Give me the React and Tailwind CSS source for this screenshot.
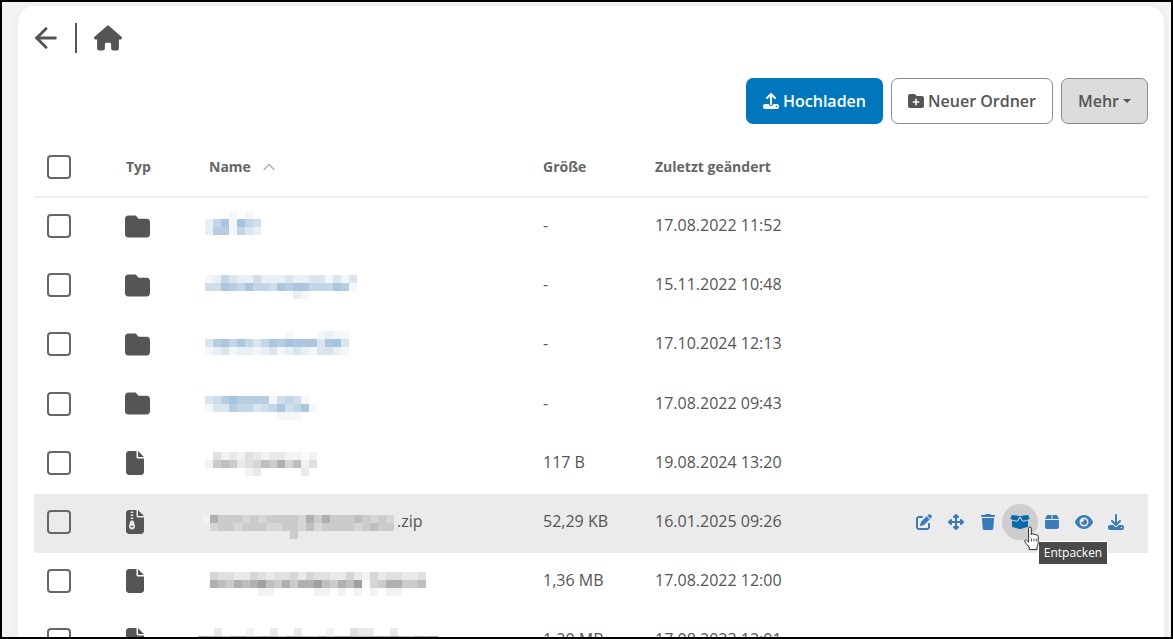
import { ArrowLeft, ChevronUp } from 'lucide-react';
import {
  FaHouse,
  FaFolder,
  FaFile,
  FaFileZipper,
  FaUpload,
  FaFolderPlus,
  FaPenToSquare,
  FaUpDownLeftRight,
  FaTrash,
  FaBoxOpen,
  FaBox,
  FaEye,
  FaDownload
} from 'react-icons/fa6';

// Farbstufen für die verpixelten Dateinamen ('.' = keine Zelle)
const BLUE = ['#ffffff', '#f3f7fa', '#e8eff5', '#dae5ef', '#cfdeea', '#c3d6e7', '#b8cde2', '#adc6df', '#a3c3df', '#98bcdc'];
const GRAY = ['#fbfbfb', '#f2f2f2', '#e9e9e9', '#e0e0e0', '#d6d6d6', '#cbcbcb', '#bebebe', '#b0b0b0', '#a0a0a0', '#8c8c8c'];

const ROWS = [
  {
    kind: 'folder', size: '-', date: '17.08.2022 11:52', palette: BLUE, x: 0, dy: 1,
    mosaic: ['...1.1.', '2571854', '2661532', '']
  },
  {
    kind: 'folder', size: '-', date: '15.11.2022 10:48', palette: BLUE, x: 0, dy: -2,
    mosaic: ['', '1253224222322331313', '4476575547677555761', '...........21']
  },
  {
    kind: 'folder', size: '-', date: '17.10.2024 12:13', palette: BLUE, x: 0, dy: 3,
    mosaic: ['..........1...1211', '367575357687773783', '123122123123213321', '']
  },
  {
    kind: 'folder', size: '-', date: '17.08.2022 09:43', palette: BLUE, x: 0, dy: 0,
    mosaic: ['', '3468666614541', '13365534574571', '.........111']
  },
  {
    kind: 'file', size: '117 B', date: '19.08.2024 13:20', palette: GRAY, x: 0, dy: -3,
    mosaic: ['', '.3121321221101', '15652346574613', '.....12.....2']
  },
  {
    kind: 'zip', size: '52,29 KB', date: '16.01.2025 09:26', palette: GRAY, x: -3, dy: 1, name: '.zip', active: true,
    mosaic: ['', '175554545555475755565454', '.45545554455464555545655', '...........5']
  },
  {
    kind: 'file', size: '1,36 MB', date: '17.08.2022 12:00', palette: GRAY, x: -3, dy: -1,
    mosaic: ['', '.433224323342433224214233223', '.765767865757786576804577556', '.......11.....11.1.1.1.11']
  },
  {
    kind: 'file', size: '1,20 MB', date: '17.08.2023 12:01', palette: GRAY, x: -7, dy: -4,
    mosaic: ['', '..2...1..2..2...1..322..2', '877688678768776868876787876878', '']
  }
];

const ACTIONS = [
  { Icon: FaPenToSquare, size: 'text-[16px]' },
  { Icon: FaUpDownLeftRight, size: 'text-[16px]' },
  { Icon: FaTrash, size: 'text-[16px]' },
  { Icon: FaBoxOpen, size: 'text-[20px]', hovered: true },
  { Icon: FaBox, size: 'text-[16px]' },
  { Icon: FaEye, size: 'text-[18px]' },
  { Icon: FaDownload, size: 'text-[16px]' }
];

const Mosaic = ({ rows, palette, x, dy }) => (
  <div style={{ transform: `translate(${x}px, ${dy}px)` }}>
    {rows.map((row, i) => (
      <div key={i} className="flex h-2">
        {row.split('').map((c, j) => (
          <span key={j} className="h-2 w-2" style={c === '.' ? undefined : { backgroundColor: palette[Number(c)] }} />
        ))}
      </div>
    ))}
  </div>
);

const Checkbox = () => (
  <div className="h-6 w-6 rounded-[4px] border-2 border-[#666666]" />
);

const TypeIcon = ({ kind }) => {
  if (kind === 'folder') return <FaFolder className="text-[25px] text-[#555555]" />;
  if (kind === 'zip') return <FaFileZipper className="-ml-[2px] text-[24px] text-[#555555]" />;
  return <FaFile className="-ml-[2px] text-[24px] text-[#555555]" />;
};

const HandCursor = () => (
  <svg viewBox="0 0 16 27" className="absolute left-[19px] top-[20px] z-20 h-[26px] w-[17px]">
    <path
      d="M5 2.2c0-1.6 2.8-1.6 2.8 0V9c.3-1.2 2.5-1.2 2.7.2.4-1 2.3-1 2.5.5.4-.7 2-.6 2 .9v6.6c0 2-.6 3-1.3 4.3v3H5.6v-2.6C4.2 20.400 2.600 18.800 1.200 16.400c-.8-1.500.6-2.700 1.800-1.600L5 16.800V2.200z"
      fill="#ffffff"
      stroke="#222222"
      strokeWidth="1"
      strokeLinejoin="round"
    />
    <path d="M8 16v-3M10.500 16v-3M13 16v-3" stroke="#222222" strokeWidth="0.8" fill="none" />
  </svg>
);

const RowActions = () => (
  <div className="mr-4 ml-auto flex">
    {ACTIONS.map(({ Icon, size, hovered }, i) => (
      <div key={i} className="relative flex h-8 w-8 items-center justify-center">
        {hovered && <div className="absolute -inset-0.5 rounded-full bg-[#cdcdcd]" />}
        <Icon className={`relative ${size} ${hovered ? 'text-[#0a68ad]' : 'text-[#3a7bb8]'}`} />
        {hovered && (
          <div className="absolute left-[34px] top-[35px] z-10 flex h-6 w-[70px] items-center justify-center border border-white bg-[#4a4a4a] text-xs text-white">
            Entpacken
          </div>
        )}
        {hovered && <HandCursor />}
      </div>
    ))}
  </div>
);

const FileRow = ({ row }) => (
  <div className={`flex h-[59.2px] items-center pb-[3px] text-[#555555] ${row.active ? 'bg-[#ebebeb]' : ''}`}>
    <div className="w-[91px] pl-[13px]">
      <Checkbox />
    </div>
    <div className="w-20">
      <TypeIcon kind={row.kind} />
    </div>
    <div className="flex w-[338px] items-center">
      <Mosaic rows={row.mosaic} palette={row.palette} x={row.x} dy={row.dy} />
      {row.name && <span className="pb-[2px] text-base">{row.name}</span>}
    </div>
    <div className="w-[112px] pb-[2px] text-base">{row.size}</div>
    <div className="pb-[2px] text-base">{row.date}</div>
    {row.active && <RowActions />}
  </div>
);

export default function App() {
  return (
    <div className="h-[639px] w-[1173px] bg-black p-[2px] font-['Open_Sans',sans-serif]">
      <div className="flex h-full flex-col overflow-hidden bg-[#f3f3f3] pl-4 pr-[7px] pt-1">
        <div className="flex-1 rounded-t-2xl bg-white px-4 pt-[18px] shadow-[0_0_6px_rgba(0,0,0,0.06)]">
          {/* Navigation */}
          <div className="flex h-7 items-center text-[#555555]">
            <ArrowLeft className="ml-[-4px] h-8 w-8" strokeWidth={2.2} />
            <div className="ml-[13px] h-[30px] w-[2px] bg-[#555555]" />
            <FaHouse className="ml-[17px] text-[28px]" />
          </div>

          {/* Aktionen */}
          <div className="mt-[26px] flex h-[46px] justify-end gap-2 text-base font-semibold">
            <button className="flex w-[137px] items-center justify-center gap-1 rounded-[7px] bg-[#0077bc] text-white">
              <FaUpload className="text-[16px]" />
              Hochladen
            </button>
            <button className="flex w-[162px] items-center justify-center gap-1 rounded-[7px] border border-[#8c8c8c] bg-white text-[#555555]">
              <FaFolderPlus className="text-[16px]" />
              Neuer Ordner
            </button>
            <button className="flex w-[87px] items-center justify-center gap-1 rounded-[7px] border border-[#8c8c8c] bg-[#dcdcdc] text-[#555555]">
              Mehr
              <span className="h-0 w-0 border-x-[4px] border-t-[4px] border-x-transparent border-t-[#555555]" />
            </button>
          </div>

          {/* Tabellenkopf */}
          <div className="flex h-[74px] items-center border-b-2 border-[#eeeeee] pt-[14px] text-sm font-bold text-[#666666]">
            <div className="w-[92px] pl-[13px]">
              <Checkbox />
            </div>
            <div className="w-[83px]">Typ</div>
            <div className="flex w-[334px] items-center gap-2">
              Name
              <ChevronUp className="h-5 w-5 text-[#aaaaaa]" strokeWidth={1.5} />
            </div>
            <div className="w-[112px]">Größe</div>
            <div>Zuletzt geändert</div>
          </div>

          {ROWS.map((row) => (
            <FileRow key={row.date} row={row} />
          ))}
        </div>
      </div>
    </div>
  );
}
